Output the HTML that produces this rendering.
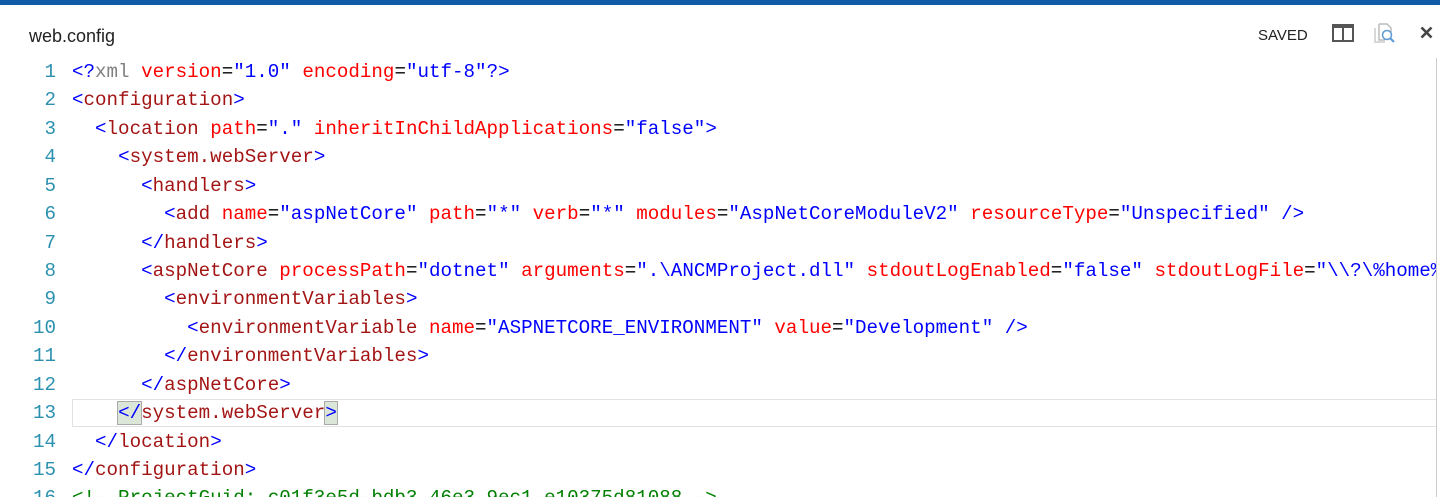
<!DOCTYPE html>
<html><head><meta charset="utf-8"><style>
body{margin:0;width:1440px;height:497px;overflow:hidden;background:#fff;position:relative;font-family:"Liberation Sans",sans-serif}
.top{position:absolute;left:0;top:0;width:1440px;height:5px;background:#0f5ba7}
.title{position:absolute;left:29px;top:26px;font-size:18px;color:#222}
.saved{position:absolute;left:1258px;top:27px;font-size:15px;color:#222}
.code{position:absolute;left:0;top:58px;width:1436px;height:439px;overflow:hidden;border-right:1px solid #ccc;font-family:"Liberation Mono",monospace;font-size:19.2px}
.l{position:absolute;left:0;height:28.43px;line-height:28.43px;white-space:pre}
.n{position:absolute;width:56px;text-align:right;color:#2b91af}
.t{position:absolute;left:72px}
.b{color:#0000ff}.e{color:#a31515}.a{color:#ff0000}.v{color:#0000ff}.k{color:#000}.g{color:#808080}.c{color:#008000}
.hl{position:absolute;left:72px;top:341px;width:1370px;height:26px;border:1px solid #e2e2e2}
.bm{background:#dbe6d8;outline:1px solid #aaa}
</style></head><body>
<div class="top"></div>
<div class="title">web.config</div>
<div class="saved">SAVED</div>
<svg style="position:absolute;left:1332px;top:24px" width="22" height="18"><rect x="1" y="1" width="20" height="16" fill="none" stroke="#555" stroke-width="2"/><rect x="1" y="1" width="20" height="3" fill="#555"/><line x1="11" y1="1" x2="11" y2="17" stroke="#555" stroke-width="2"/></svg>
<svg style="position:absolute;left:1373px;top:22px" width="24" height="22"><path d="M6 2h8l4 4v4M6 2v16h6" fill="none" stroke="#bbb" stroke-width="1.5"/><path d="M2 6v14h10" fill="none" stroke="#ccc" stroke-width="1.5"/><circle cx="14" cy="13" r="4.5" fill="none" stroke="#5a9bd5" stroke-width="1.5"/><line x1="17" y1="16" x2="21" y2="20" stroke="#5a9bd5" stroke-width="2"/></svg>
<svg style="position:absolute;left:1420px;top:26px" width="13" height="13"><path d="M1.5 1.5L11.5 11.5M11.5 1.5L1.5 11.5" stroke="#444" stroke-width="2.6"/></svg>
<div class="code">
<div class="hl"></div>
<div class="l" style="top:0"><span class="n">1</span><span class="t"><span class="b">&lt;?</span><span class="g">xml</span> <span class="a">version</span><span class="k">=</span><span class="v">"1.0"</span> <span class="a">encoding</span><span class="k">=</span><span class="v">"utf-8"</span><span class="b">?&gt;</span></span></div>
<div class="l" style="top:28.43px"><span class="n">2</span><span class="t"><span class="b">&lt;</span><span class="e">configuration</span><span class="b">&gt;</span></span></div>
<div class="l" style="top:56.86px"><span class="n">3</span><span class="t">  <span class="b">&lt;</span><span class="e">location</span> <span class="a">path</span><span class="k">=</span><span class="v">"."</span> <span class="a">inheritInChildApplications</span><span class="k">=</span><span class="v">"false"</span><span class="b">&gt;</span></span></div>
<div class="l" style="top:85.29px"><span class="n">4</span><span class="t">    <span class="b">&lt;</span><span class="e">system.webServer</span><span class="b">&gt;</span></span></div>
<div class="l" style="top:113.72px"><span class="n">5</span><span class="t">      <span class="b">&lt;</span><span class="e">handlers</span><span class="b">&gt;</span></span></div>
<div class="l" style="top:142.15px"><span class="n">6</span><span class="t">        <span class="b">&lt;</span><span class="e">add</span> <span class="a">name</span><span class="k">=</span><span class="v">"aspNetCore"</span> <span class="a">path</span><span class="k">=</span><span class="v">"*"</span> <span class="a">verb</span><span class="k">=</span><span class="v">"*"</span> <span class="a">modules</span><span class="k">=</span><span class="v">"AspNetCoreModuleV2"</span> <span class="a">resourceType</span><span class="k">=</span><span class="v">"Unspecified"</span> <span class="b">/&gt;</span></span></div>
<div class="l" style="top:170.58px"><span class="n">7</span><span class="t">      <span class="b">&lt;/</span><span class="e">handlers</span><span class="b">&gt;</span></span></div>
<div class="l" style="top:199.01px"><span class="n">8</span><span class="t">      <span class="b">&lt;</span><span class="e">aspNetCore</span> <span class="a">processPath</span><span class="k">=</span><span class="v">"dotnet"</span> <span class="a">arguments</span><span class="k">=</span><span class="v">".\ANCMProject.dll"</span> <span class="a">stdoutLogEnabled</span><span class="k">=</span><span class="v">"false"</span> <span class="a">stdoutLogFile</span><span class="k">=</span><span class="v">"\\?\%home%\LogFiles\stdout"</span></span></div>
<div class="l" style="top:227.44px"><span class="n">9</span><span class="t">        <span class="b">&lt;</span><span class="e">environmentVariables</span><span class="b">&gt;</span></span></div>
<div class="l" style="top:255.87px"><span class="n">10</span><span class="t">          <span class="b">&lt;</span><span class="e">environmentVariable</span> <span class="a">name</span><span class="k">=</span><span class="v">"ASPNETCORE_ENVIRONMENT"</span> <span class="a">value</span><span class="k">=</span><span class="v">"Development"</span> <span class="b">/&gt;</span></span></div>
<div class="l" style="top:284.3px"><span class="n">11</span><span class="t">        <span class="b">&lt;/</span><span class="e">environmentVariables</span><span class="b">&gt;</span></span></div>
<div class="l" style="top:312.73px"><span class="n">12</span><span class="t">      <span class="b">&lt;/</span><span class="e">aspNetCore</span><span class="b">&gt;</span></span></div>
<div class="l" style="top:341.16px"><span class="n">13</span><span class="t">    <span class="b bm">&lt;/</span><span class="e">system.webServer</span><span class="b bm">&gt;</span></span></div>
<div class="l" style="top:369.59px"><span class="n">14</span><span class="t">  <span class="b">&lt;/</span><span class="e">location</span><span class="b">&gt;</span></span></div>
<div class="l" style="top:398.02px"><span class="n">15</span><span class="t"><span class="b">&lt;/</span><span class="e">configuration</span><span class="b">&gt;</span></span></div>
<div class="l" style="top:426.45px"><span class="n">16</span><span class="t"><span class="c">&lt;!--ProjectGuid: c01f3e5d-bdb3-46e3-9ec1-e10375d81088--&gt;</span></span></div>
</div>
</body></html>
